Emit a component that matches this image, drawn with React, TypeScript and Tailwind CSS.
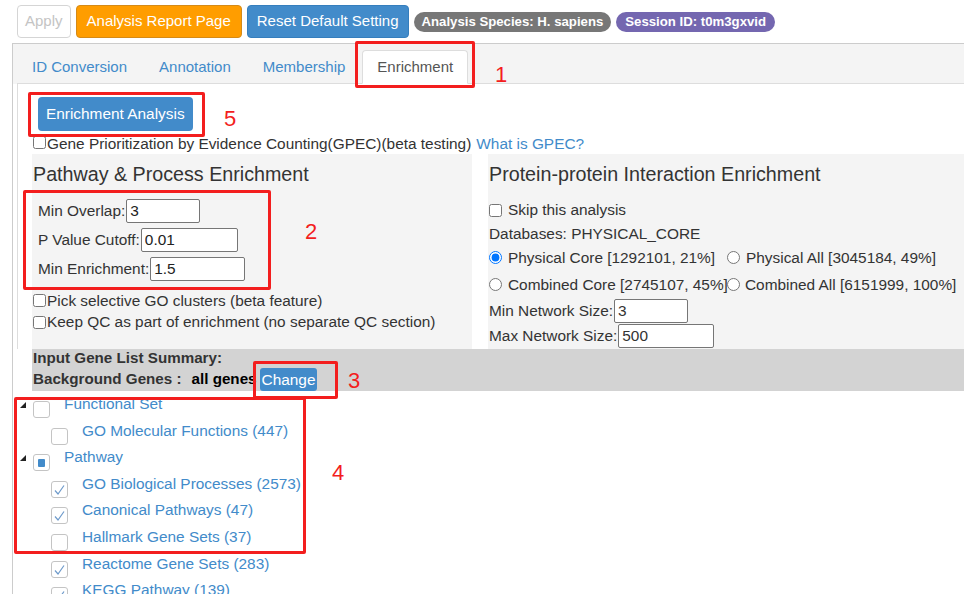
import React from "react";

const tabs = ["ID Conversion", "Annotation", "Membership", "Enrichment"];

type TreeRow = { label: string; level: 0 | 1; state: "none" | "checked" | "partial" };

const tree: TreeRow[] = [
  { label: "Functional Set", level: 0, state: "none" },
  { label: "GO Molecular Functions (447)", level: 1, state: "none" },
  { label: "Pathway", level: 0, state: "partial" },
  { label: "GO Biological Processes (2573)", level: 1, state: "checked" },
  { label: "Canonical Pathways (47)", level: 1, state: "checked" },
  { label: "Hallmark Gene Sets (37)", level: 1, state: "none" },
  { label: "Reactome Gene Sets (283)", level: 1, state: "checked" },
  { label: "KEGG Pathway (139)", level: 1, state: "checked" },
];

function TreeBox({ state }: { state: TreeRow["state"] }) {
  return (
    <span className="mt-[9px] flex h-[17px] w-[17px] shrink-0 items-center justify-center rounded-[3px] border border-[#c4c4c4] bg-white">
      {state === "checked" && (
        <svg width="15" height="15" viewBox="0 0 15 15">
          <polyline points="3,8.5 6,12 12,3.5" fill="none" stroke="#6f9bcb" strokeWidth="1.2" />
        </svg>
      )}
      {state === "partial" && <span className="h-[8px] w-[7px] rounded-[1px] bg-[#428bca]" />}
    </span>
  );
}

function Field({ label, value, w }: { label: string; value: string; w: string }) {
  return (
    <div className="flex h-[29px] items-center pl-[6px]">
      <span>{label}</span>
      <input
        readOnly
        value={value}
        className={`ml-[1px] h-[24px] rounded-[2px] border border-[#767676] bg-white px-[3px] text-[15.4px] text-[#222] outline-none ${w}`}
      />
    </div>
  );
}

function Annot({ className, n, nClass }: { className: string; n: string; nClass: string }) {
  return (
    <>
      <div className={`absolute rounded-[2px] border-[3px] border-[#f31e1e] ${className}`} />
      <div className={`absolute text-[22px] leading-none text-[#f31e1e] ${nClass}`}>{n}</div>
    </>
  );
}

export default function App() {
  return (
    <div className="relative h-[594px] w-[964px] overflow-hidden bg-white font-['Liberation_Sans',Arial,sans-serif] text-[15.4px] text-[#333]">
      {/* top bar */}
      <div className="flex items-center gap-[5px] pl-[17px] pt-[5px] text-[15px]">
        <button className="h-[33px] rounded-[4px] border border-[#d5d5d5] bg-white px-[7px] text-[#c4c4c4]">Apply</button>
        <button className="h-[33px] rounded-[4px] border border-[#d58a17] bg-[#ff9d00] px-[10px] text-white">Analysis Report Page</button>
        <button className="h-[33px] rounded-[4px] border border-[#357ebd] bg-[#428bca] px-[9px] text-white">Reset Default Setting</button>
        <span className="flex h-[20px] items-center rounded-full bg-[#777] px-[8px] text-[13.2px] font-bold text-white">Analysis Species: H. sapiens</span>
        <span className="flex h-[20px] items-center rounded-full bg-[#7467b0] px-[9px] text-[13.2px] font-bold text-white">Session ID: t0m3gxvid</span>
      </div>

      {/* main box */}
      <div className="ml-[12px] mt-[5px] w-[1000px] border border-[#ccc] pb-[40px]">
        <div className="bg-[#f4f4f4] pl-[4px] pt-[6px] text-[15px]">
          <ul className="flex gap-[2px] border-b border-[#ddd]">
            {tabs.map((t) => (
              <li
                key={t}
                className={`-mb-px flex h-[34px] items-center rounded-t-[4px] border px-[14px] ${
                  t === "Enrichment" ? "border-[#ddd] border-b-white bg-white text-[#555]" : "border-transparent text-[#428bca]"
                }`}
              >
                {t}
              </li>
            ))}
          </ul>
        </div>

        <div className="ml-[4px] border-l border-[#ddd]">
          <button className="ml-[20px] mt-[13px] h-[34px] rounded-[4px] bg-[#428bca] px-[8px] text-white">Enrichment Analysis</button>
          <div className="ml-[15px] flex h-[23px] items-center pt-[2px]">
            <input type="checkbox" className="m-0 mr-[1px] -mt-[3px] h-[13px] w-[13px]" />
            <span>Gene Prioritization by Evidence Counting(GPEC)(beta testing)</span>
            <span className="ml-[5px] text-[#428bca]">What is GPEC?</span>
          </div>

          <div className="ml-[14px] flex gap-[16px]">
            <div className="w-[440px] bg-[#f4f4f4]">
              <div className="flex h-[42px] items-center pl-[1px] text-[19.7px]">Pathway &amp; Process Enrichment</div>
              <Field label="Min Overlap:" value="3" w="w-[74px]" />
              <Field label="P Value Cutoff:" value="0.01" w="w-[97px]" />
              <Field label="Min Enrichment:" value="1.5" w="w-[95px]" />
              <div className="mt-[7px] flex h-[21px] items-center pl-[1px]">
                <input type="checkbox" className="m-0 mr-[1px] h-[13px] w-[13px]" />
                <span>Pick selective GO clusters (beta feature)</span>
              </div>
              <div className="flex h-[22px] items-center pl-[1px]">
                <input type="checkbox" className="m-0 mr-[1px] h-[13px] w-[13px]" />
                <span>Keep QC as part of enrichment (no separate QC section)</span>
              </div>
            </div>

            <div className="flex-1 bg-[#f4f4f4] pl-[1px]">
              <div className="flex h-[42px] items-center text-[19.7px]">Protein-protein Interaction Enrichment</div>
              <div className="mt-[2px] flex h-[24px] items-center">
                <input type="checkbox" className="m-0 mr-[6px] h-[13px] w-[13px]" />
                <span>Skip this analysis</span>
              </div>
              <div className="flex h-[24px] items-center">Databases: PHYSICAL_CORE</div>
              <div className="flex h-[24px] items-center">
                <label className="flex w-[238px] items-center whitespace-nowrap">
                  <input type="radio" name="db" defaultChecked className="m-0 mr-[6px] h-[13px] w-[13px]" />
                  Physical Core [1292101, 21%]
                </label>
                <label className="flex items-center whitespace-nowrap">
                  <input type="radio" name="db" className="m-0 mr-[6px] h-[13px] w-[13px]" />
                  Physical All [3045184, 49%]
                </label>
              </div>
              <div className="mt-[2px] flex h-[26px] items-center">
                <label className="flex w-[238px] items-center whitespace-nowrap">
                  <input type="radio" name="db" className="m-0 mr-[6px] h-[13px] w-[13px]" />
                  Combined Core [2745107, 45%]
                </label>
                <label className="flex items-center whitespace-nowrap">
                  <input type="radio" name="db" className="m-0 mr-[5px] h-[13px] w-[13px]" />
                  Combined All [6151999, 100%]
                </label>
              </div>
              <div className="flex h-[25px] items-center">
                <span>Min Network Size:</span>
                <input readOnly value="3" className="ml-[1px] h-[24px] w-[74px] rounded-[2px] border border-[#767676] bg-white px-[3px] text-[15.4px] outline-none" />
              </div>
              <div className="flex h-[26px] items-center">
                <span>Max Network Size:</span>
                <input readOnly value="500" className="ml-[1px] h-[24px] w-[96px] rounded-[2px] border border-[#767676] bg-white px-[3px] text-[15.4px] outline-none" />
              </div>
            </div>
          </div>
        </div>

        {/* summary band */}
        <div className="ml-[19px] bg-[#d3d3d3] pl-[1px] text-[15.2px] font-bold">
          <div className="flex h-[19px] items-center">Input Gene List Summary:</div>
          <div className="flex h-[23px] items-center">
            <span>Background Genes :</span>
            <span className="ml-[10px] text-black">all genes</span>
            <span className="ml-[3px] flex h-[23px] items-center rounded-[3px] bg-[#428bca] px-[2px] text-[15.4px] font-normal text-white">Change</span>
          </div>
        </div>

        {/* category tree */}
        <div className="pt-[1px]">
          {tree.map((r) => (
            <div key={r.label} className="flex h-[26.6px] items-start whitespace-nowrap text-[#428bca]">
              {r.level === 0 ? (
                <>
                  <svg width="6" height="6" viewBox="0 0 6 6" className="ml-[7px] mt-[10px] shrink-0">
                    <polygon points="6,0 6,6 0,6" fill="#222" />
                  </svg>
                  <span className="ml-[7px]" />
                  <TreeBox state={r.state} />
                  <span className="ml-[14px] leading-[24px]">{r.label}</span>
                </>
              ) : (
                <>
                  <span className="ml-[38px]" />
                  <TreeBox state={r.state} />
                  <span className="ml-[14px] leading-[24px]">{r.label}</span>
                </>
              )}
            </div>
          ))}
        </div>
      </div>

      {/* red annotation marks */}
      <div className="pointer-events-none absolute inset-0">
        <Annot className="left-[355px] top-[41px] h-[47px] w-[120px]" n="1" nClass="left-[495px] top-[64px]" />
        <Annot className="left-[23px] top-[190px] h-[100px] w-[248px]" n="2" nClass="left-[305px] top-[221px]" />
        <Annot className="left-[253px] top-[361px] h-[38px] w-[85px]" n="3" nClass="left-[348px] top-[370px]" />
        <Annot className="left-[14px] top-[397px] h-[157px] w-[292px]" n="4" nClass="left-[332px] top-[462px]" />
        <Annot className="left-[28px] top-[92px] h-[45px] w-[177px]" n="5" nClass="left-[224px] top-[108px]" />
      </div>
    </div>
  );
}
